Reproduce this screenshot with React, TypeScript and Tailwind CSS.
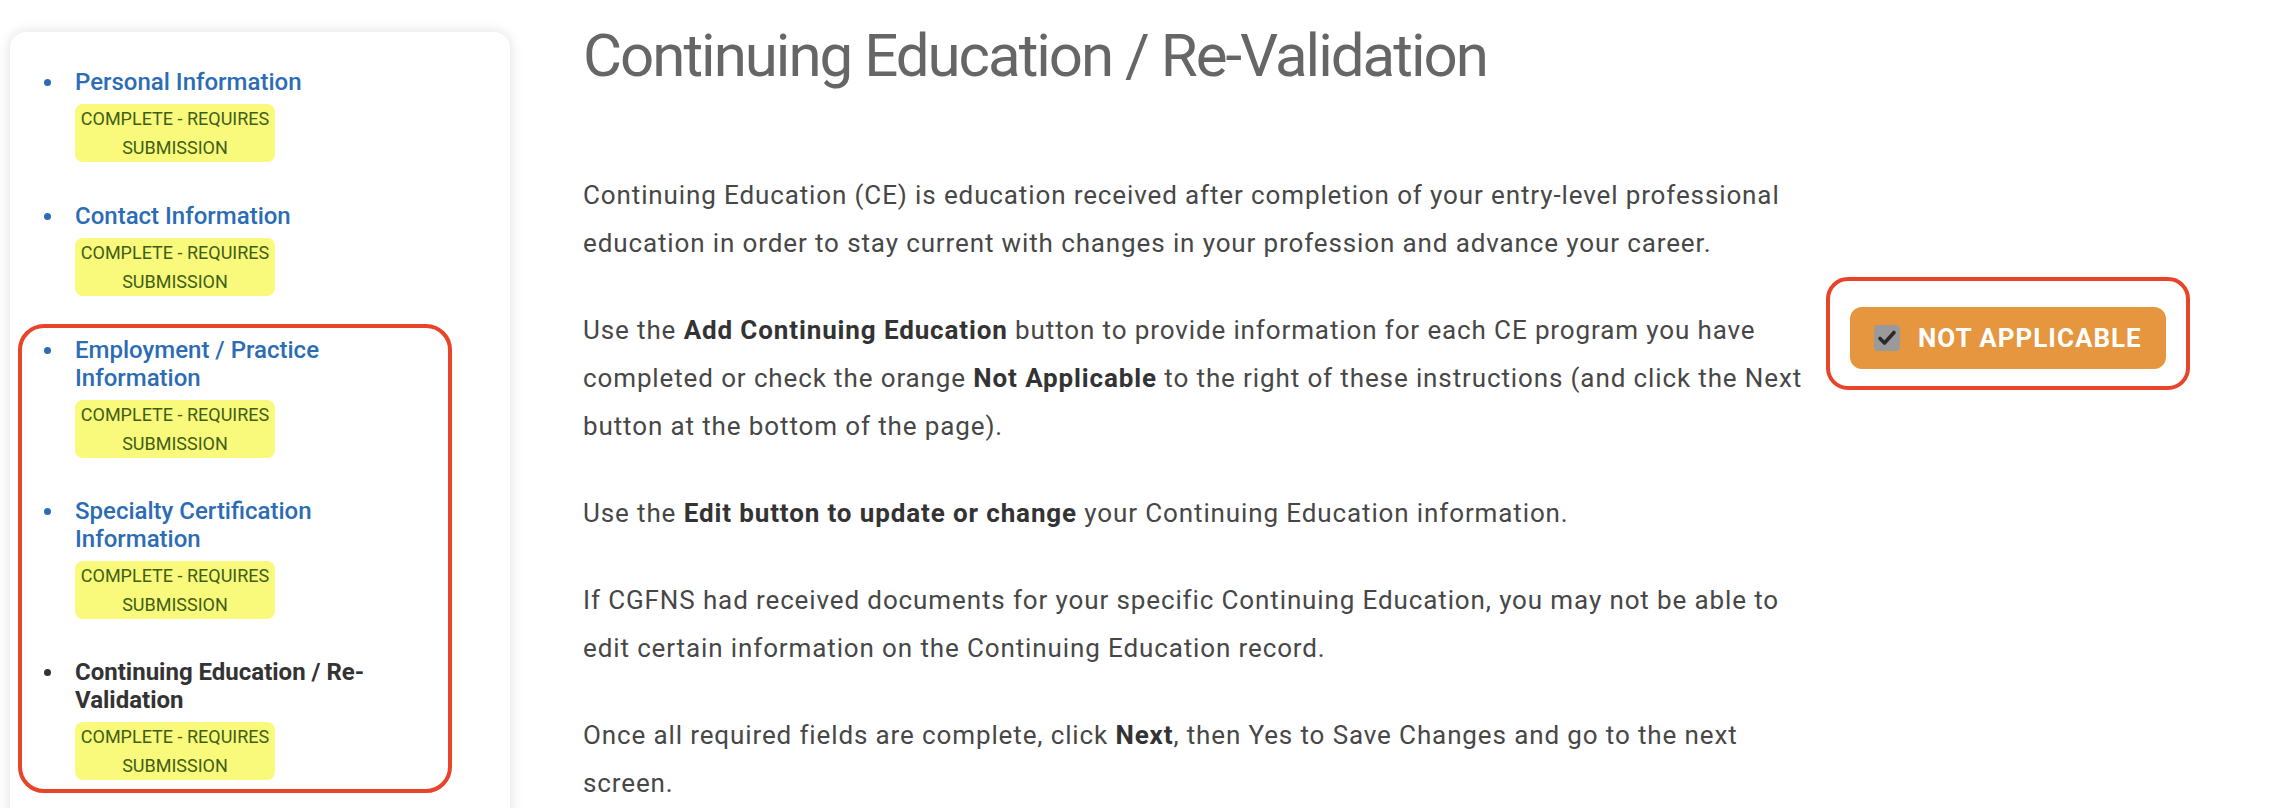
import clsx from 'clsx';

interface NavItemProps {
  title: string;
  active?: boolean;
  inset?: boolean;
  className?: string;
}

function NavItem({ title, active = false, inset = false, className }: NavItemProps) {
  return (
    <div className={clsx('flex', inset ? 'pl-[22px]' : 'pl-[26px]', className)}>
      <span
        className={clsx(
          'mt-[11px] h-[7px] w-[7px] shrink-0 rounded-full',
          active ? 'bg-[#333333]' : 'bg-[#2c6cb4]'
        )}
      />
      <div className="ml-[24px] w-[320px]">
        <div
          className={clsx(
            'text-[24px] leading-[28px]',
            active ? 'font-bold text-[#333333]' : 'font-medium text-[#2c6cb4]'
          )}
        >
          {title}
        </div>
        <div className="mt-[8px] w-[200px] rounded-[8px] bg-[#f9f97b] text-center text-[18px] leading-[29px] whitespace-nowrap text-[#3f5f16]">
          COMPLETE - REQUIRES
          <br />
          SUBMISSION
        </div>
      </div>
    </div>
  );
}

export default function App() {
  return (
    <div className="flex min-h-[808px] items-start bg-white font-['Roboto',sans-serif]">
      {/* left progress card */}
      <aside className="ml-[10px] mt-[32px] w-[500px] shrink-0 rounded-[16px] bg-white pb-[60px] pl-[8px] pt-[36px] shadow-[0_0_14px_rgba(0,0,0,0.13)]">
        <NavItem title="Personal Information" />
        <NavItem title="Contact Information" className="mt-[40px]" />
        <div className="mt-[28px] w-[434px] rounded-[26px] border-4 border-[#e8442a] pb-[9px] pt-[8px]">
          <NavItem title="Employment / Practice Information" inset />
          <NavItem title="Specialty Certification Information" inset className="mt-[39px]" />
          <NavItem title="Continuing Education / Re-Validation" inset active className="mt-[39px]" />
        </div>
      </aside>

      <main className="ml-[73px] flex items-start">
        <div className="w-[1232px]">
          <h1 className="mt-[20px] text-[60px] font-normal leading-[72px] tracking-[-2px] text-[#666666]">
            Continuing Education / Re-Validation
          </h1>
          <div className="mt-[79px] text-[26px] leading-[48px] tracking-[0.88px] text-[#474747]">
            <p className="mb-[39px]">
              Continuing Education (CE) is education received after completion of your entry-level professional
              education in order to stay current with changes in your profession and advance your career.
            </p>
            <p className="mb-[39px]">
              Use the <b className="font-bold text-[#333333]">Add Continuing Education</b> button to provide
              information for each CE program you have completed or check the orange{' '}
              <b className="font-bold text-[#333333]">Not Applicable</b> to the right of these instructions (and
              click the Next button at the bottom of the page).
            </p>
            <p className="mb-[39px]">
              Use the <b className="font-bold text-[#333333]">Edit button to update or change</b> your Continuing
              Education information.
            </p>
            <p className="mb-[39px]">
              If CGFNS had received documents for your specific Continuing Education, you may not be able to edit
              certain information on the Continuing Education record.
            </p>
            <p>
              Once all required fields are complete, click <b className="font-bold text-[#333333]">Next</b>, then
              Yes to Save Changes and go to the next screen.
            </p>
          </div>
        </div>

        <div className="ml-[11px] mt-[277px] rounded-[22px] border-4 border-[#e8442a] px-[20px] pb-[17px] pt-[26px]">
          <button
            type="button"
            className="flex h-[62px] w-[316px] items-center rounded-[12px] bg-[#e5963e] pl-[24px]"
          >
            <span className="flex h-[26px] w-[26px] items-center justify-center rounded-[4px] bg-[#9a9a9a]">
              <svg width="22" height="22" viewBox="0 0 22 22" aria-hidden="true">
                <polyline
                  points="4,11.5 8.5,16 18,5.5"
                  fill="none"
                  stroke="#2a2a2a"
                  strokeWidth="3.6"
                  strokeLinecap="round"
                  strokeLinejoin="round"
                />
              </svg>
            </span>
            <span className="ml-[18px] text-[26px] font-bold leading-none tracking-[1px] text-white">
              NOT APPLICABLE
            </span>
          </button>
        </div>
      </main>
    </div>
  );
}
